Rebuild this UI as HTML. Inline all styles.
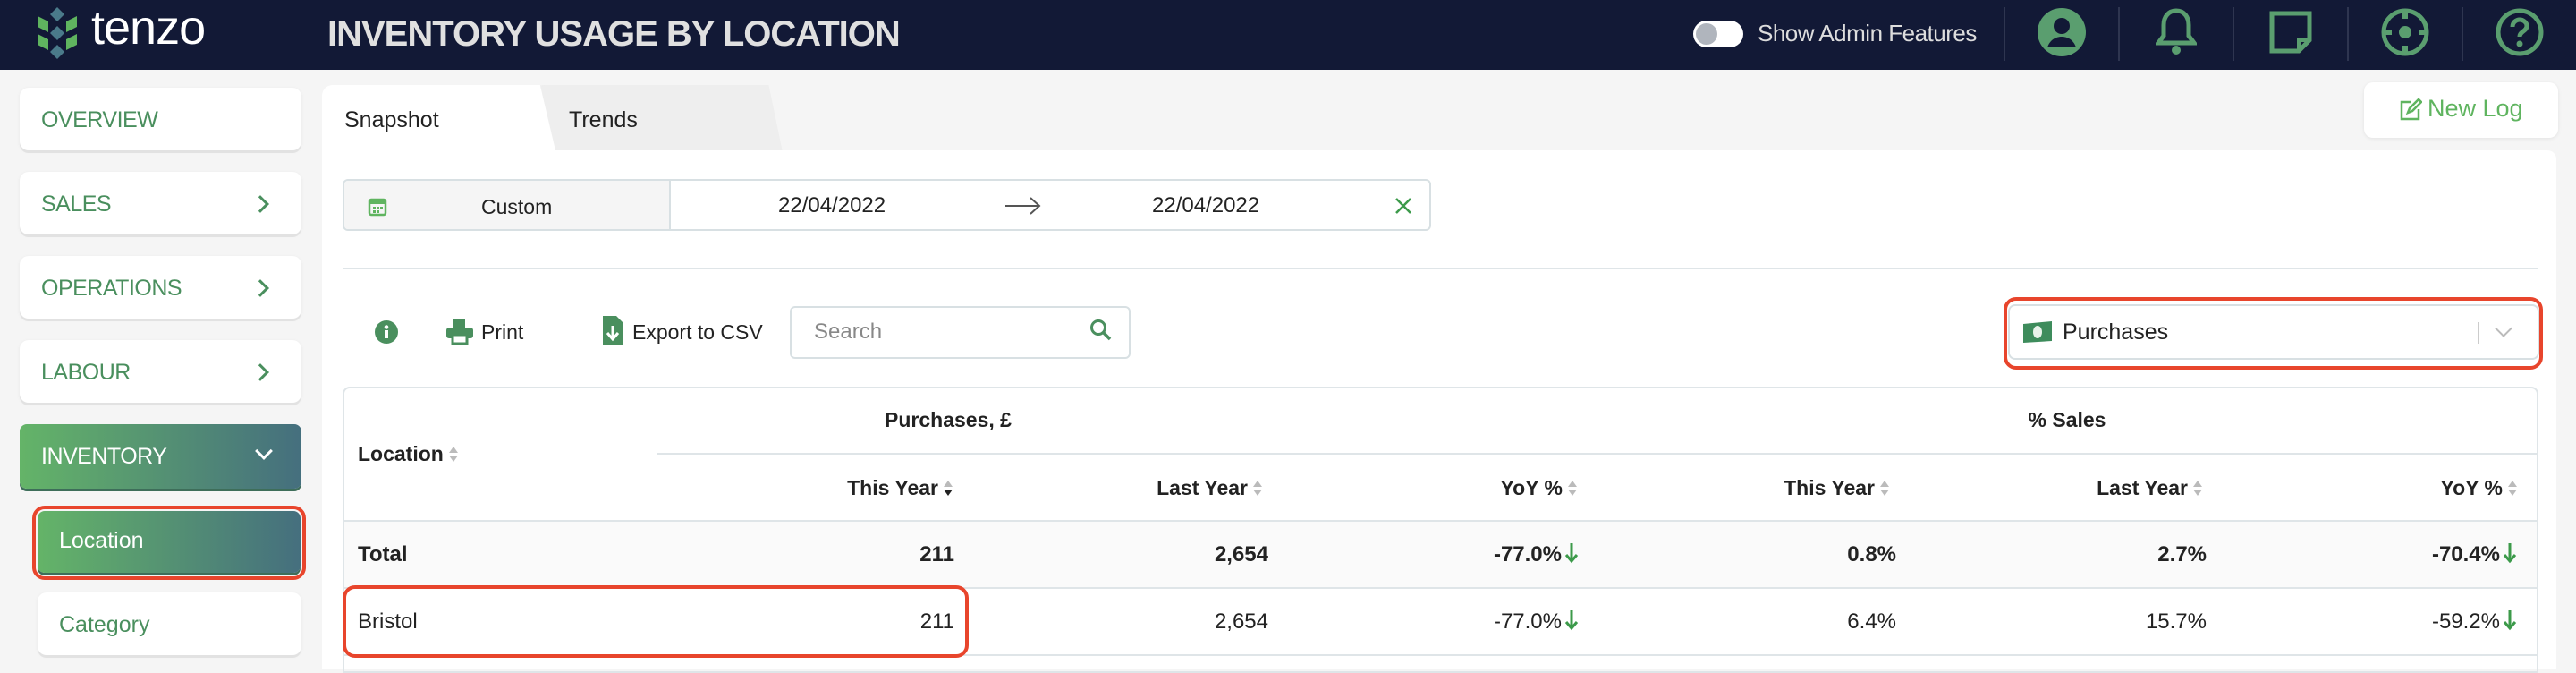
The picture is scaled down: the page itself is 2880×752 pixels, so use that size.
<!DOCTYPE html>
<html><head><meta charset="utf-8"><style>
*{box-sizing:border-box;margin:0;padding:0}
body{width:2880px;height:742px;overflow:hidden;background:#f5f5f5;font-family:"Liberation Sans",sans-serif;color:#222;position:relative}
.a{position:absolute}
.hdr{left:0;top:0;width:2880px;height:78px;background:#121936}
.card{background:#fff;border-radius:10px;box-shadow:0 3px 0 #e2e2e2,0 1px 4px rgba(0,0,0,.06)}
.nav{font-size:25px;color:#4a8f5e;letter-spacing:-.5px}
.chev{width:14px;height:14px;border-right:3px solid #4a8f5e;border-bottom:3px solid #4a8f5e;transform:rotate(-45deg)}
.sep{width:2px;height:60px;top:8px;background:#2e3550}
.th{font-size:23px;font-weight:bold;color:#222;white-space:nowrap}
.r{text-align:right}
.sort{display:inline-block;width:10px;height:18px;vertical-align:-2px;margin-left:6px;position:relative}
.sort:before{content:"";position:absolute;left:0;top:0;border:5px solid transparent;border-bottom:7px solid #bbb;border-top:0}
.sort:after{content:"";position:absolute;left:0;top:10px;border:5px solid transparent;border-top:7px solid #bbb;border-bottom:0}
.sort.d:after{border-top-color:#222}
.td{font-size:24px;white-space:nowrap}
.arr{display:inline-block;width:16px;height:24px;margin-left:3px;vertical-align:-3px}
</style></head><body>
<svg width="0" height="0" style="position:absolute"><defs><symbol id="dn" viewBox="0 0 16 24"><path d="M8 1v20M2 14l6 7 6-7" fill="none" stroke="#3c9a4a" stroke-width="3"/></symbol></defs></svg>
<div class="a hdr"></div>
<svg class="a" style="left:36px;top:6px" width="56" height="62" viewBox="0 0 56 62">
<g fill="#4a7a8a"><path d="M28 2l8 8-8 8-8-8z"/><path d="M28 44l8 8-8 8-8-8z"/><path d="M28 23l8 8-8 8-8-8z"/></g>
<g fill="#5fb45f"><path d="M6 12l12 6v12l-12-6z"/><path d="M50 12l-12 6v12l12-6z"/><path d="M6 32l12 6v12l-12-6z"/><path d="M50 32l-12 6v12l12-6z"/></g>
</svg>
<div class="a" style="left:102px;top:0px;font-size:54px;color:#fff;letter-spacing:-1px">tenzo</div>
<div class="a" style="left:366px;top:16px;font-size:40px;font-weight:bold;color:#e0e0e0;letter-spacing:-1px;white-space:nowrap">INVENTORY USAGE BY LOCATION</div>
<div class="a" style="left:1893px;top:23px;width:56px;height:30px;border-radius:15px;background:#fff"></div>
<div class="a" style="left:1896px;top:26px;width:24px;height:24px;border-radius:12px;background:#b0b5bd"></div>
<div class="a" style="left:1965px;top:22px;font-size:26px;color:#ddd;white-space:nowrap;letter-spacing:-.5px">Show Admin Features</div>
<div class="a sep" style="left:2240px"></div><div class="a sep" style="left:2368px"></div><div class="a sep" style="left:2496px"></div><div class="a sep" style="left:2624px"></div><div class="a sep" style="left:2752px"></div>
<svg class="a" style="left:2278px;top:9px" width="54" height="54" viewBox="0 0 54 54"><circle cx="27" cy="27" r="27" fill="#5a9e6f"/><circle cx="27" cy="20" r="9" fill="#121936"/><path d="M11 44c3-9 10-12 16-12s13 3 16 12z" fill="#121936"/></svg>
<svg class="a" style="left:2410px;top:8px" width="46" height="56" viewBox="0 0 46 56"><path d="M23 4c-9 0-14 7-14 16v12l-6 8h40l-6-8V20c0-9-5-16-14-16z" fill="none" stroke="#5a9e6f" stroke-width="5"/><circle cx="23" cy="48" r="5" fill="#5a9e6f"/></svg>
<svg class="a" style="left:2536px;top:11px" width="50" height="50" viewBox="0 0 50 50"><path d="M4 4h42v30L34 46H4z" fill="none" stroke="#5a9e6f" stroke-width="5"/><path d="M34 46V34h12" fill="none" stroke="#5a9e6f" stroke-width="4"/></svg>
<svg class="a" style="left:2662px;top:9px" width="54" height="54" viewBox="0 0 54 54"><circle cx="27" cy="27" r="24" fill="none" stroke="#5a9e6f" stroke-width="5"/><circle cx="27" cy="27" r="7" fill="#5a9e6f"/><g fill="#5a9e6f"><rect x="24" y="2" width="6" height="10"/><rect x="24" y="42" width="6" height="10"/><rect x="2" y="24" width="10" height="6"/><rect x="42" y="24" width="10" height="6"/></g></svg>
<svg class="a" style="left:2790px;top:9px" width="54" height="54" viewBox="0 0 54 54"><circle cx="27" cy="27" r="24" fill="none" stroke="#5a9e6f" stroke-width="5"/><path d="M19 21c0-5 4-8 8-8s8 3 8 7c0 6-8 6-8 12" fill="none" stroke="#5a9e6f" stroke-width="5"/><circle cx="27" cy="40" r="3.5" fill="#5a9e6f"/></svg>

<!-- sidebar -->
<div class="a card" style="left:22px;top:98px;width:315px;height:70px"></div>
<div class="a nav" style="left:46px;top:120px">OVERVIEW</div>
<div class="a card" style="left:22px;top:192px;width:315px;height:70px"></div>
<div class="a nav" style="left:46px;top:214px">SALES</div><div class="a chev" style="left:284px;top:221px"></div>
<div class="a card" style="left:22px;top:286px;width:315px;height:70px"></div>
<div class="a nav" style="left:46px;top:308px">OPERATIONS</div><div class="a chev" style="left:284px;top:315px"></div>
<div class="a card" style="left:22px;top:380px;width:315px;height:70px"></div>
<div class="a nav" style="left:46px;top:402px">LABOUR</div><div class="a chev" style="left:284px;top:409px"></div>
<div class="a" style="left:22px;top:474px;width:315px;height:72px;border-radius:8px;background:linear-gradient(90deg,#64b468,#456f7e);box-shadow:0 3px 0 #3e6e5a"></div>
<div class="a nav" style="left:46px;top:496px;color:#fff">INVENTORY</div>
<div class="a" style="left:288px;top:497px;width:14px;height:14px;border-right:3px solid #fff;border-bottom:3px solid #fff;transform:rotate(45deg)"></div>
<div class="a" style="left:36px;top:565px;width:306px;height:83px;border:4px solid #e8452c;border-radius:14px"></div>
<div class="a" style="left:42px;top:571px;width:294px;height:69px;border-radius:8px;background:linear-gradient(90deg,#64b468,#456f7e);box-shadow:0 3px 0 #3e6e5a"></div>
<div class="a" style="left:66px;top:590px;font-size:25px;color:#fff">Location</div>
<div class="a card" style="left:42px;top:662px;width:295px;height:70px"></div>
<div class="a" style="left:66px;top:684px;font-size:25px;color:#4a8f5e">Category</div>

<!-- tabs / panel -->
<div class="a" style="left:600px;top:95px;width:276px;height:80px;background:#eeeeee;border-radius:12px 12px 0 0;clip-path:polygon(0 0,94% 0,100% 100%,0 100%);box-shadow:0 0 6px rgba(0,0,0,.08)"></div>
<div class="a" style="left:360px;top:168px;width:2498px;height:580px;background:#fff;border-radius:0 10px 0 0"></div>
<div class="a" style="left:360px;top:95px;width:265px;height:90px;background:#fff;border-radius:12px 12px 0 0;clip-path:polygon(0 0,92% 0,100% 100%,0 100%)"></div>
<div class="a" style="left:385px;top:120px;font-size:25px">Snapshot</div>
<div class="a" style="left:636px;top:120px;font-size:25px">Trends</div>
<div class="a card" style="left:2643px;top:92px;width:217px;height:62px;box-shadow:0 1px 4px rgba(0,0,0,.08)"></div>
<svg class="a" style="left:2682px;top:110px" width="26" height="26" viewBox="0 0 26 26"><path d="M14 4H3v19h19V12" fill="none" stroke="#5fb45f" stroke-width="2.5"/><path d="M10 16l2-5 10-10 3 3-10 10z" fill="none" stroke="#5fb45f" stroke-width="2.5"/></svg>
<div class="a" style="left:2714px;top:106px;font-size:27px;color:#5fb45f">New Log</div>

<!-- date range -->
<div class="a" style="left:383px;top:200px;width:1217px;height:58px;border:2px solid #d8e0e3;border-radius:6px;background:#fff;overflow:hidden">
<div class="a" style="left:0;top:0;width:365px;height:56px;background:#f5f5f5;border-right:2px solid #d8e0e3"></div></div>
<svg class="a" style="left:411px;top:220px" width="22" height="22" viewBox="0 0 22 22"><rect x="2" y="3" width="18" height="17" rx="2" fill="none" stroke="#5fb45f" stroke-width="2.5"/><rect x="2" y="3" width="18" height="5" fill="#5fb45f"/><g fill="#5fb45f"><rect x="6" y="11" width="3" height="3"/><rect x="10" y="11" width="3" height="3"/><rect x="14" y="11" width="3" height="3"/><rect x="6" y="15" width="3" height="3"/><rect x="10" y="15" width="3" height="3"/></g></svg>
<div class="a" style="left:538px;top:218px;font-size:23px">Custom</div>
<div class="a" style="left:870px;top:216px;font-size:24px">22/04/2022</div>
<svg class="a" style="left:1122px;top:219px" width="44" height="22" viewBox="0 0 44 22"><path d="M2 11h38M30 2l10 9-10 9" fill="none" stroke="#555" stroke-width="2"/></svg>
<div class="a" style="left:1288px;top:216px;font-size:24px">22/04/2022</div>
<svg class="a" style="left:1559px;top:220px" width="20" height="20" viewBox="0 0 20 20"><path d="M2 2l16 16M18 2L2 18" stroke="#3c9a4a" stroke-width="2.5"/></svg>
<div class="a" style="left:383px;top:299px;width:2455px;height:2px;background:#dfe5e8"></div>

<!-- toolbar -->
<svg class="a" style="left:419px;top:358px" width="26" height="26" viewBox="0 0 26 26"><circle cx="13" cy="13" r="13" fill="#4a8f5e"/><rect x="11" y="11" width="4" height="9" fill="#fff"/><circle cx="13" cy="7.5" r="2.3" fill="#fff"/></svg>
<svg class="a" style="left:498px;top:354px" width="32" height="32" viewBox="0 0 32 32"><rect x="8" y="2" width="14" height="10" fill="#4a8f5e"/><rect x="1" y="12" width="30" height="12" rx="3" fill="#4a8f5e"/><rect x="8" y="20" width="16" height="10" fill="#fff" stroke="#4a8f5e" stroke-width="3"/></svg>
<div class="a" style="left:538px;top:358px;font-size:23px">Print</div>
<svg class="a" style="left:672px;top:352px" width="26" height="34" viewBox="0 0 26 34"><path d="M2 1h15l8 8v24H2z" fill="#4a8f5e"/><path d="M13 12v14M7 20l6 7 6-7" fill="none" stroke="#fff" stroke-width="3"/></svg>
<div class="a" style="left:707px;top:358px;font-size:23px">Export to CSV</div>
<div class="a" style="left:883px;top:342px;width:381px;height:59px;border:2px solid #d8e0e3;border-radius:6px;background:#fff"></div>
<div class="a" style="left:910px;top:357px;font-size:24px;color:#888">Search</div>
<svg class="a" style="left:1218px;top:356px" width="26" height="26" viewBox="0 0 26 26"><circle cx="10" cy="10" r="7.5" fill="none" stroke="#4a8f5e" stroke-width="3"/><path d="M16 16l7 7" stroke="#4a8f5e" stroke-width="3.5"/></svg>

<div class="a" style="left:2240px;top:332px;width:603px;height:81px;border:4px solid #e8452c;border-radius:14px"></div>
<div class="a" style="left:2245px;top:340px;width:594px;height:62px;border:2px solid #d8e0e3;border-radius:8px;background:#fff"></div>
<svg class="a" style="left:2261px;top:358px" width="34" height="26" viewBox="0 0 34 26"><path d="M1 4l32-3v22L1 25z" fill="#3e8c5c"/><ellipse cx="17" cy="13" rx="5" ry="7" fill="#e8f2ea"/></svg>
<div class="a" style="left:2306px;top:357px;font-size:25px">Purchases</div>
<div class="a" style="left:2770px;top:360px;width:2px;height:24px;background:#ccc"></div>
<div class="a" style="left:2792px;top:360px;width:14px;height:14px;border-right:2px solid #bbb;border-bottom:2px solid #bbb;transform:rotate(45deg)"></div>

<!-- table -->
<div class="a" style="left:383px;top:432px;width:2455px;height:320px;border:2px solid #dfe5e8;border-radius:8px 8px 0 0"></div>
<div class="a" style="left:735px;top:506px;width:2102px;height:2px;background:#dfe5e8"></div>
<div class="a" style="left:385px;top:581px;width:2451px;height:2px;background:#dfe5e8"></div>
<div class="a" style="left:385px;top:583px;width:2451px;height:74px;background:#fafafa"></div>
<div class="a" style="left:385px;top:656px;width:2451px;height:2px;background:#dfe5e8"></div>
<div class="a" style="left:385px;top:731px;width:2451px;height:2px;background:#dfe5e8"></div>

<div class="a th" style="left:400px;top:494px">Location<span class="sort"></span></div>
<div class="a th" style="left:1060px;top:456px;width:400px;margin-left:-200px;text-align:center">Purchases, £</div>
<div class="a th" style="left:2311px;top:456px;width:400px;margin-left:-200px;text-align:center">% Sales</div>
<div class="a th r" style="right:1815px;top:532px">This Year<span class="sort d"></span></div>
<div class="a th r" style="right:1469px;top:532px">Last Year<span class="sort"></span></div>
<div class="a th r" style="right:1117px;top:532px">YoY %<span class="sort"></span></div>
<div class="a th r" style="right:768px;top:532px">This Year<span class="sort"></span></div>
<div class="a th r" style="right:418px;top:532px">Last Year<span class="sort"></span></div>
<div class="a th r" style="right:66px;top:532px">YoY %<span class="sort"></span></div>

<div class="a td" style="left:400px;top:606px;font-weight:bold">Total</div>
<div class="a td r" style="right:1813px;top:606px;font-weight:bold">211</div>
<div class="a td r" style="right:1462px;top:606px;font-weight:bold">2,654</div>
<div class="a td r" style="right:1115px;top:606px;font-weight:bold">-77.0%<svg class="arr"><use href="#dn"/></svg></div>
<div class="a td r" style="right:760px;top:606px;font-weight:bold">0.8%</div>
<div class="a td r" style="right:413px;top:606px;font-weight:bold">2.7%</div>
<div class="a td r" style="right:66px;top:606px;font-weight:bold">-70.4%<svg class="arr"><use href="#dn"/></svg></div>

<div class="a td" style="left:400px;top:681px">Bristol</div>
<div class="a td r" style="right:1813px;top:681px">211</div>
<div class="a td r" style="right:1462px;top:681px">2,654</div>
<div class="a td r" style="right:1115px;top:681px">-77.0%<svg class="arr"><use href="#dn"/></svg></div>
<div class="a td r" style="right:760px;top:681px">6.4%</div>
<div class="a td r" style="right:413px;top:681px">15.7%</div>
<div class="a td r" style="right:66px;top:681px">-59.2%<svg class="arr"><use href="#dn"/></svg></div>
<div class="a" style="left:383px;top:654px;width:700px;height:81px;border:4px solid #e8452c;border-radius:14px"></div>
</body></html>
